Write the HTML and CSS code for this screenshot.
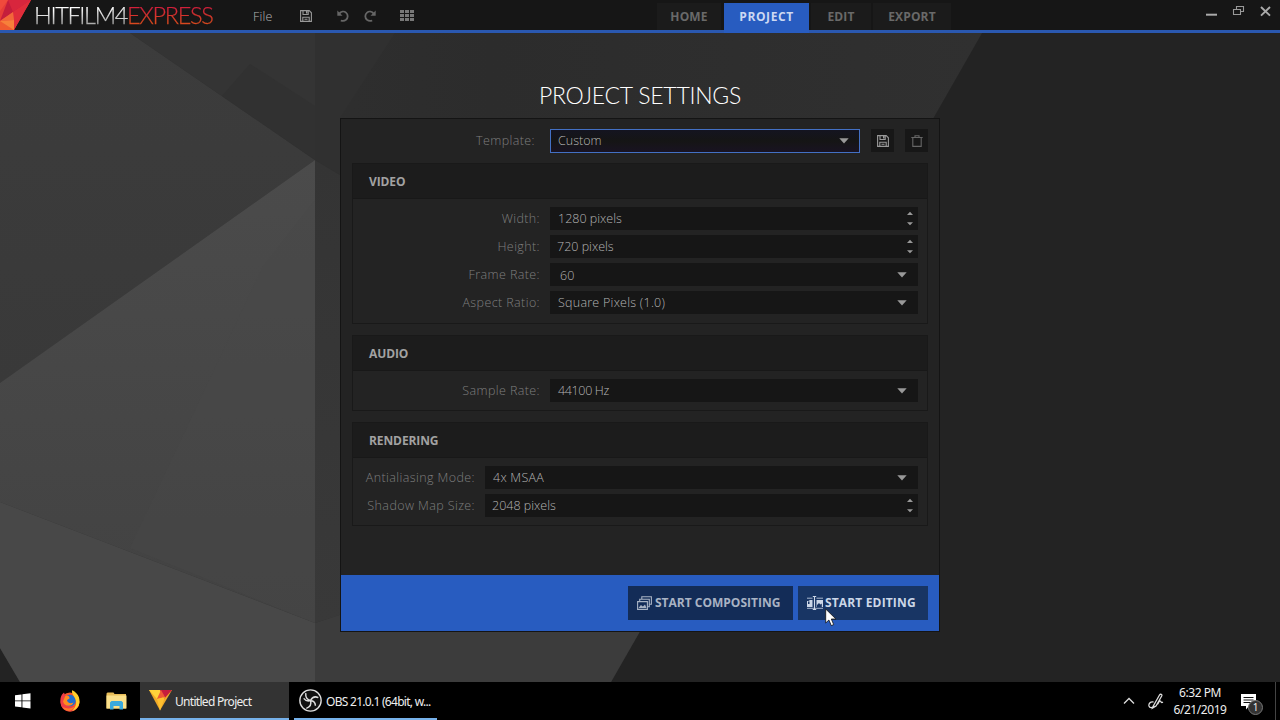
FILE: index.html
```html
<!DOCTYPE html>
<html lang="en">
<head>
<meta charset="utf-8">
<title>HitFilm 4 Express</title>
<link rel="stylesheet" href="styles.css">
</head>
<body>
<svg width="0" height="0" class="defs">
  <defs>
    <symbol id="save" viewBox="0 0 12 12"><path d="M.6.6h8.6l2.2 2.2v8.6H.6zM3 .8v3.7h5.2V.8M2.8 11.2V7.3h6.4v3.9M4.5 9.3h3" fill="none" stroke="currentColor" stroke-width="1.1"/><path d="M6 1h1.5v2.5H6z" fill="currentColor"/></symbol>
    <symbol id="down" viewBox="0 0 10 6"><path d="M.3.3h9.4L5 5.5z" fill="currentColor"/></symbol>
    <symbol id="spin" viewBox="0 0 6 15"><path d="M0 4 3 .8 6 4zM0 11.2h6l-3 3.1z" fill="currentColor"/></symbol>
  </defs>
</svg>
<div class="app">
  <header class="top">
    <svg class="mark" width="31" height="30" viewBox="0 0 31 30">
      <path d="M0 0h31L14 30H0z" fill="#e63d38"/>
      <path d="M8 0h23L0 21z" fill="#c41e3c"/>
      <path d="M8 0h23L13 12z" fill="#d8263d"/>
      <path d="M0 0h8L0 11z" fill="#f04a3c"/>
      <path d="M13 12 31 0 14 30z" fill="#e02d3b"/>
      <path d="M0 21 13 12l1 8z" fill="#f2673a"/>
      <path d="M0 21l14-1v10H0z" fill="#f7803a"/>
      <path d="M0 21l14 9H0z" fill="#ef5a30"/>
    </svg>
    <div class="brand"><span class="b1">HITFILM4</span><span class="b2">EXPRESS</span></div>
    <span class="file">File</span>
    <svg class="ic save-ic" width="12" height="12"><use href="#save"/></svg>
    <svg class="ic undo" width="12" height="12" viewBox="0 0 12 12"><path d="M2.300 3.600C4 1.500 7 1 9 2.600c2.300 1.900 2.200 5.300 0 7.200-1.500 1.200-3.500 1.400-5.200.7" fill="none" stroke="currentColor" stroke-width="1.800"/><path d="M.3.500v5.200h5.200z" fill="currentColor"/></svg>
    <svg class="ic redo" width="12" height="12" viewBox="0 0 12 12"><path d="M9.700 3.600C8 1.500 5 1 3 2.600.700 4.500.800 7.900 3 9.800c1.500 1.200 3.500 1.400 5.200.7" fill="none" stroke="currentColor" stroke-width="1.800"/><path d="M11.700.500v5.200H6.500z" fill="currentColor"/></svg>
    <svg class="ic grid" width="14" height="11" viewBox="0 0 14 11"><path d="M0 0h4v3H0zM5 0h4v3H5zM10 0h4v3h-4zM0 4h4v3H0zM5 4h4v3H5zM10 4h4v3h-4zM0 8h4v3H0zM5 8h4v3H5zM10 8h4v3h-4z" fill="currentColor"/></svg>
    <nav class="tabs">
      <span class="tab home">HOME</span><span class="tab project">PROJECT</span><span class="tab edit">EDIT</span><span class="tab export">EXPORT</span>
    </nav>
    <svg class="win" width="68" height="14" viewBox="0 0 68 14"><path d="M0 9.700h11" stroke="#aaa" stroke-width="2"/><path d="M27.500 4.500h7v5h-7zM30.500 4V1.500h7v5H35M27 4.500h8M30 1.500h8" fill="none" stroke="#999" stroke-width="1.100"/><path d="m55 2 9 8.600m0-8.600-9 8.600" stroke="#aaa" stroke-width="1.900"/></svg>
  </header>
  <main class="stage">
    <svg class="facets" width="1280" height="649" viewBox="0 33 1280 649">
      <defs>
        <linearGradient id="ga" x1="0" y1="0" x2="0" y2="1"><stop offset="0" stop-color="#3c3c3c"/><stop offset="1" stop-color="#393939"/></linearGradient>
        <linearGradient id="gb" x1="0" y1="0" x2="0" y2="1"><stop offset="0" stop-color="#4b4b4b"/><stop offset="1" stop-color="#424242"/></linearGradient>
        <linearGradient id="gc" x1="0" y1="0" x2="0" y2="1"><stop offset="0" stop-color="#343434"/><stop offset="1" stop-color="#393939"/></linearGradient>
        <linearGradient id="gd" x1="0" y1="0" x2="1" y2="0"><stop offset="0" stop-color="#333"/><stop offset=".5" stop-color="#2c2c2c"/><stop offset="1" stop-color="#303030"/></linearGradient>
      </defs>
      <path d="M0 33h982L611 682H20L0 648z" fill="url(#gd)"/>
      <path d="M0 33h130l185 127L0 383z" fill="url(#ga)"/>
      <path d="M130 33h185v127z" fill="#343434"/>
      <path d="M222 96 250 64l65 42v54z" fill="#313131"/>
      <path d="M0 383 315 160v463L0 502z" fill="url(#gb)"/>
      <path d="M262 268 315 200v423L130 548z" fill="#484848" opacity=".4"/>
      <path d="M0 502 315 623v59H20L0 648z" fill="#484848"/>
      <path d="m315 160 25 15v440l-25 8z" fill="url(#gc)"/>
      <path d="m315 623 70-23h273l-47 82H315z" fill="#3c3c3c"/>
      <path d="m315 33 80 0-55 85v57l-25-15z" fill="#303030"/>
    </svg>
    <h1 class="title">PROJECT SETTINGS</h1>
    <section class="panel">
      <div class="template">
        <span class="label">Template:</span>
        <div class="field focus"><span>Custom</span><svg class="dd" width="10" height="6"><use href="#down"/></svg></div>
        <span class="sq"><svg width="12" height="12"><use href="#save"/></svg></span>
        <span class="sq trash"><svg width="12" height="12" viewBox="0 0 12 12"><path d="M.3 2.500h11.400M4 2.300V.700h4v1.600M1.800 2.500v8.900h8.400V2.500" fill="none" stroke="currentColor" stroke-width="1.100"/></svg></span>
      </div>
      <div class="group video">
        <h2>VIDEO</h2>
        <div class="rows">
          <div class="row"><span class="label">Width:</span><div class="field"><span>1280 pixels</span><svg class="sp" width="6" height="15"><use href="#spin"/></svg></div></div>
          <div class="row"><span class="label">Height:</span><div class="field"><span class="nl">720 pixels</span><svg class="sp" width="6" height="15"><use href="#spin"/></svg></div></div>
          <div class="row"><span class="label">Frame Rate:</span><div class="field"><span class="nr">60</span><svg class="dd" width="10" height="6"><use href="#down"/></svg></div></div>
          <div class="row"><span class="label">Aspect Ratio:</span><div class="field"><span class="wide">Square Pixels (1.0)</span><svg class="dd" width="10" height="6"><use href="#down"/></svg></div></div>
        </div>
      </div>
      <div class="group audio">
        <h2>AUDIO</h2>
        <div class="rows">
          <div class="row"><span class="label">Sample Rate:</span><div class="field"><span class="hz">44100 Hz</span><svg class="dd" width="10" height="6"><use href="#down"/></svg></div></div>
        </div>
      </div>
      <div class="group rendering">
        <h2>RENDERING</h2>
        <div class="rows">
          <div class="row"><span class="label">Antialiasing Mode:</span><div class="field"><span class="wide">4x MSAA</span><svg class="dd" width="10" height="6"><use href="#down"/></svg></div></div>
          <div class="row"><span class="label">Shadow Map Size:</span><div class="field"><span class="nl">2048 pixels</span><svg class="sp" width="6" height="15"><use href="#spin"/></svg></div></div>
        </div>
      </div>
      <footer class="actions">
        <button class="btn comp"><svg width="15" height="14" viewBox="0 0 15 14"><path d="M.6 5.600h9.800v7.800H.6zM2.700 5.300V3.200h9.600v7.600h-1.600M4.800 2.900V.700h9.600v7.600h-1.800" fill="none" stroke="currentColor" stroke-width="1.100"/><path d="m1.500 12 2.400-3 2 1.500L8 8.400l1.500 3.700z" fill="currentColor"/></svg><span>START COMPOSITING</span></button>
        <button class="btn ed"><svg width="16" height="14" viewBox="0 0 16 14"><path d="M0 2.200h5.500M9.500 2.200H16M0 12.300h16" stroke="currentColor" stroke-width="1" opacity=".8"/><path d="M0 5h1.500L3 4h2.500v7H0zM9.500 4H16v7H9.500z" fill="currentColor"/><path d="m10 9 2-2 1.400 1.400 1.400-1V11H10zM1 5.500h1.500V8H1z" fill="#183564"/><path d="M5.800.500h3.400M5.800 13.500h3.400M7.500 0v14" stroke="currentColor" stroke-width="1.100"/></svg><span>START EDITING</span></button>
      </footer>
    </section>
    <svg class="cursor" width="12" height="19" viewBox="0 0 12 19"><path d="M.7 1v14l3.200-3 2.400 5.600 2.400-1L6.300 11h4.600z" fill="#fff" stroke="#111" stroke-width=".8"/></svg>
  </main>
  <footer class="taskbar">
    <svg class="start" width="16" height="16" viewBox="0 0 16 16"><path d="M0 2.300 6.500 1.400v6H0zM7.400 1.300 15.500.2v7.200H7.400zM0 8.300h6.500v6L0 13.400zM7.400 8.300h8.100v7.200l-8.100-1.100z" fill="#fff"/></svg>
    <svg class="fox" width="22" height="22" viewBox="0 0 22 22"><circle cx="11" cy="12" r="9.500" fill="#f5572c"/><path d="M1.500 12C1 7 3 4 5 2.500L6 5h5L9 14l8 3 3-6c.7 6-3.500 10.500-9 10.500S2 18 1.500 12" fill="#ef3d44"/><circle cx="11" cy="10.500" r="5.800" fill="#1f6fd0"/><path d="M6.200 6C8 5 11 6 10.500 8.500L8 10c0 3 4 4 6.500 2.500-1 4-9 5-10.500-1z" fill="#ff8b1f"/><path d="M13 .3C16 1.500 21 5 20.500 12c-.4 5-4 8-7.500 9 4-4 5-8 3.300-12C15 6 12.500 4 13 .3" fill="#ffcf2d"/><path d="M4 17c3 2 9 2 12-1-1 4-5 5.500-8 4.500S4 18 4 17" fill="#ff7c24"/></svg>
    <svg class="folder" width="21" height="18" viewBox="0 0 21 18"><path d="M.5 1.500 1.500.5h6l1 1.500h11.500v14.500H.5z" fill="#e8bd58"/><path d="M.5 3.500h20v13H.5z" fill="#fbe08a"/><path d="M4 17.500v-7l1.500-1.500h10l1.500 1.500v7h-3.500V14h-6v3.500z" fill="#39a9dd"/></svg>
    <div class="task active"><svg width="23" height="21" viewBox="0 0 23 21"><path d="M0 0h23L11 20.500z" fill="#f0aa28"/><path d="M0 0h13L8 9z" fill="#ffd33a"/><path d="M11 0h12l-8 9z" fill="#c51d3d"/><path d="M8 9 12 0l4 7z" fill="#ef5a35"/><path d="m8 9 8-2-5 13.500z" fill="#ffc02f"/></svg><span>Untitled Project</span></div>
    <div class="task obs"><svg width="23" height="23" viewBox="0 0 22 22"><circle cx="11" cy="11" r="10.200" fill="#111" stroke="#ddd" stroke-width="1.300"/><path d="M6.500 4c-.5 3.800 1.300 6.600 4.500 7M11 11c1.600-3 4.500-4.200 7.500-2.700M11 11c1 3.400-.5 6.300-4 7.500M11 11c2.600.300 4.600 2.200 4.700 5M11 11c-2.300.800-5 0-6.500-2" fill="none" stroke="#ddd" stroke-width="1.400"/></svg><span>OBS 21.0.1 (64bit, w...</span></div>
    <svg class="chev" width="12" height="8" viewBox="0 0 12 8"><path d="m1 6.500 5-5 5 5" fill="none" stroke="#ddd" stroke-width="1.300"/></svg>
    <svg class="pen" width="16" height="17" viewBox="0 0 16 17"><path d="M5 13.500 11.500 2c1-1.500 3-.5 2.200 1L8 13l-3.500 2zM5.500 9C2 8.500.5 11 1 13c.7 2.500 4 2 5-.5M9.500 11c1 0 1-3 2.500-3s.5 2.500 3 1.200" fill="none" stroke="#ddd" stroke-width="1.300"/></svg>
    <div class="clock"><span>6:32 PM</span><span class="date">6/21/2019</span></div>
    <div class="note"><svg width="16" height="16" viewBox="0 0 16 16"><path d="M0 0h15v12H8l-3 3.500V12H0z" fill="#fff"/><path d="M2.500 3.500h10M2.500 6h10M2.500 8.500h8" stroke="#111"/></svg><span class="badge">1</span></div>
    <i class="edge"></i>
  </footer>
</div>
</body>
</html>
```
FILE: styles.css
```css
* { box-sizing: border-box; }
body { margin: 0; background: #232323; font-family: "Open Sans", "Noto Sans", sans-serif; }
svg { display: block; flex: none; }
.defs { position: absolute; }
.app { width: 1280px; height: 720px; display: flex; flex-direction: column; overflow: hidden; }

.top { height: 33px; flex: none; display: flex; align-items: flex-start; background: #161616; border-bottom: 3px solid #2a58b0; }
.brand { width: 180px; margin-left: 2px; padding-left: 1px; font: 300 23.5px/30px Lato, sans-serif; white-space: nowrap; display: flex; letter-spacing: -1.35px; }
.b1, .b2 { background-clip: text; -webkit-background-clip: text; color: transparent; padding-right: 2px; margin-right: -2px; -webkit-text-stroke: .25px transparent; }
.b1 { background-image: linear-gradient(#fff 35%, #aaa 80%); }
.b2 { background-image: linear-gradient(#d3203a 30%, #d8481f 75%); }
.file { margin-left: 40px; width: 47px; font-size: 12.5px; line-height: 33px; color: #b4b4b4; font-weight: 300; letter-spacing: .2px; }
.ic { margin-top: 10px; color: #777; }
.save-ic { color: #999; }
.undo { margin-left: 25px; color: #666; }
.redo { margin-left: 15px; color: #666; }
.grid { margin-left: 24px; color: #777; }
.tabs { display: flex; gap: 2px; margin: 3px 0 0 243px; }
.tab { height: 27px; line-height: 27px; text-align: center; font-weight: 700; font-size: 12px; letter-spacing: .15px; color: #696969; background: #1b1b1b; }
.home { width: 64px; }
.project { width: 85px; height: 30px; background: #285cc0; color: #ccd8f2; letter-spacing: .6px; }
.edit { width: 60px; }
.export { width: 78px; }
.tab.home { margin-right: 1px; }
.win { margin: 5px 0 0 255px; }

.stage { height: 649px; flex: none; position: relative; display: flex; flex-direction: column; align-items: center; }
.facets { position: absolute; left: 0; top: 0; }
.title { position: relative; margin: 47px 0 0; height: 38px; font: 300 23px/30px Lato, sans-serif; color: #fff; white-space: nowrap; letter-spacing: -.25px; }
.panel { position: relative; width: 600px; height: 514px; background: #232323; border: 1px solid #141414; display: flex; flex-direction: column; }
.template { display: flex; margin: 10px 0 10px 12px; height: 24px; }
.label { font-size: 12.5px; font-weight: 300; line-height: 23px; color: #7e7e7e; text-align: right; width: 187px; margin-right: 10px; white-space: nowrap; letter-spacing: .4px; }
.template .label { width: 182px; margin-right: 15px; }
.field { height: 23px; flex: 1; background: #161616; display: flex; align-items: center; justify-content: space-between; padding: 0 11px 0 8px; font-size: 12.5px; font-weight: 300; line-height: 22px; color: #b4b4b4; white-space: nowrap; }
.field svg { color: #999; }
.dd { margin-right: 0; }
.row .sp { margin-right: -6px; }
.focus { flex: none; width: 310px; height: 24px; padding-left: 7px; padding-right: 10px; border: 1px solid #4370c4; background: linear-gradient(#141420, #151515 50%, #191322); }
.sq { width: 23px; height: 23px; margin-left: 11px; background: #171717; color: #999; display: flex; align-items: center; justify-content: center; }
.trash { color: #666; }
.group { margin: 0 11px 11px; border: 1px solid #191919; background: #232323; flex: none; }
h2 { margin: 0; height: 35px; padding-left: 16px; background: #1c1c1c; border-bottom: 1px solid #181818; font-size: 12px; line-height: 36px; font-weight: 700; color: #a2a2a2; letter-spacing: -.1px; }
.video { height: 161px; }
.audio { height: 76px; }
.rendering { height: 104px; }
.rows { padding: 8px 9px 0 0; display: flex; flex-direction: column; gap: 5px; }
.row { display: flex; height: 23px; }
.rendering .label { width: 122px; }
.nl { margin-left: -1px; }
.nr { margin-left: 2px; padding-top: 2px; }
.wide { letter-spacing: .25px; }
.hz { letter-spacing: -.35px; }
.actions { margin-top: auto; height: 56px; background: #285cc0; display: flex; justify-content: flex-end; gap: 5px; padding: 11px; }
.btn { border: 0; padding: 0 0 0 9px; height: 34px; background: #132c57; color: #a9b3c4; display: flex; align-items: center; font: 700 12px/34px "Open Sans", sans-serif; white-space: nowrap; letter-spacing: 0; }
.btn span { margin-left: 3px; }
.comp { width: 165px; }
.ed { width: 130px; background: #183564; color: #ccd7e8; }
.ed span { margin-left: 2px; letter-spacing: .15px; }
.cursor { position: absolute; left: 825px; top: 575px; }

.taskbar { height: 38px; flex: none; background: #000; display: flex; align-items: center; color: #eee; font: 12px "Noto Sans", sans-serif; }
.start { margin-left: 15px; }
.fox { margin-left: 28px; }
.folder { margin-left: 25px; }
.task { height: 38px; display: flex; align-items: center; white-space: nowrap; border-bottom: 2px solid #76b1ea; }
.active { width: 149px; margin-left: 13px; padding-left: 9px; background: #333; letter-spacing: -.7px; }
.active span { margin-left: 3px; }
.obs { width: 143px; margin-left: 5px; padding-left: 5px; letter-spacing: -.72px; }
.obs span { margin-left: 4px; }
.task span { padding-top: 2px; }
.chev { margin-left: 686px; }
.pen { margin-left: 13px; }
.clock { width: 64px; margin-left: 4px; display: flex; flex-direction: column; align-items: center; line-height: 17px; letter-spacing: -.45px; }
.note { position: relative; margin-left: 9px; margin-top: 2px; }
.badge { position: absolute; left: 7px; top: 6px; width: 15px; height: 15px; border-radius: 50%; background: #333; border: 1px solid #777; font-size: 10px; line-height: 13px; text-align: center; }
.edge { width: 1px; height: 38px; background: #444; margin-left: 18px; }
```
